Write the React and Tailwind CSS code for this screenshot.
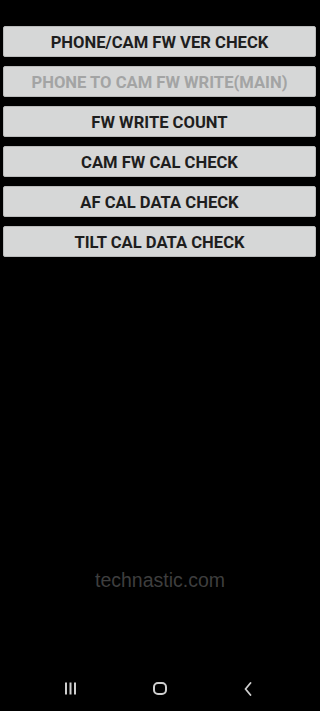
export default function App() {
  const buttons = [
    { label: 'PHONE/CAM FW VER CHECK' },
    { label: 'PHONE TO CAM FW WRITE(MAIN)', disabled: true },
    { label: 'FW WRITE COUNT' },
    { label: 'CAM FW CAL CHECK' },
    { label: 'AF CAL DATA CHECK' },
    { label: 'TILT CAL DATA CHECK' },
  ];

  return (
    <div className="w-[320px] h-[711px] bg-black flex flex-col" style={{ fontFamily: 'Roboto, "Liberation Sans", sans-serif' }}>
      {/* Button list */}
      <div className="flex flex-col gap-[9px] pt-[26px] pl-[3px] pr-[4px]">
        {buttons.map((b) => (
          <button
            key={b.label}
            disabled={b.disabled}
            className={`h-[31px] w-full bg-[#d6d7d7] border border-[#b9baba] rounded-[2px] text-[16.6px] font-bold leading-none pt-[3px] ${b.disabled ? 'text-[#a3a4a4]' : 'text-[#1e1e1e]'}`}
          >
            {b.label}
          </button>
        ))}
      </div>

      {/* Watermark */}
      <div className="flex-1 flex items-end justify-center pb-[79px]">
        <span className="text-[19.5px] leading-none text-[#3e3e3e]" style={{ fontFamily: '"Liberation Sans", Arial, sans-serif' }}>technastic.com</span>
      </div>

      {/* Navigation bar */}
      <div className="h-[42px] flex items-center pl-[64px] pb-[3px]">
        <svg width="13" height="13" viewBox="0 0 13 13">
          <rect x="1" y="0.5" width="2" height="12" fill="#cfcfcf" />
          <rect x="5.5" y="0.5" width="2" height="12" fill="#cfcfcf" />
          <rect x="10" y="0.5" width="2" height="12" fill="#cfcfcf" />
        </svg>
        <div className="ml-[76px] w-[14px] h-[13px] border-2 border-[#cfcfcf] rounded-[5px]" />
        <svg width="8" height="14" viewBox="0 0 8 14" className="ml-[77px]">
          <path d="M6.5 1 L1.5 7 L6.5 13" stroke="#cfcfcf" strokeWidth="1.8" fill="none" strokeLinecap="round" strokeLinejoin="round" />
        </svg>
      </div>
    </div>
  );
}
